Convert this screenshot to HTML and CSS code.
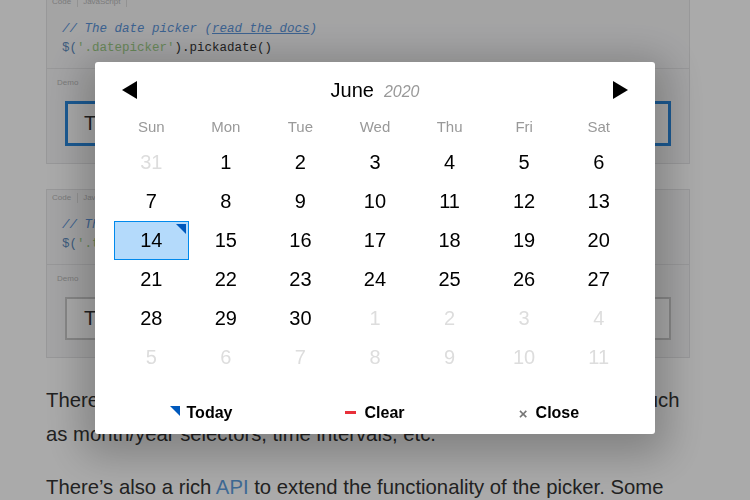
FILE: index.html
```html
<!DOCTYPE html>
<html>
<head>
<meta charset="utf-8">
<link rel="stylesheet" href="styles.css">
</head>
<body>
<div class="page">
  <div class="panel">
    <div class="tabs"><span class="tab">Code</span><span class="tab">JavaScript</span></div>
    <pre class="code"><span class="cm">// The date picker (<a class="cm-link">read the docs</a>)</span>
<span class="fn">$(</span><span class="str">'.datepicker'</span>).pickadate()</pre>
    <div class="demo">
      <div class="tabs demo-tabs"><span class="tab">Demo</span></div>
      <div class="input input-focus">Try me…</div>
    </div>
  </div>
  <div class="panel">
    <div class="tabs"><span class="tab">Code</span><span class="tab">JavaScript</span></div>
    <pre class="code"><span class="cm">// The time picker (<a class="cm-link">read the docs</a>)</span>
<span class="fn">$(</span><span class="str">'.timepicker'</span>).pickatime()</pre>
    <div class="demo">
      <div class="tabs demo-tabs"><span class="tab">Demo</span></div>
      <div class="input">Try me…</div>
    </div>
  </div>
  <p class="para">There are a number of other options to customize the picker with, such as month/year selectors, time intervals, etc.</p>
  <p class="para">There’s also a rich <a class="link">API</a> to extend the functionality of the picker. Some examples of what you can do.</p>
</div>

<div class="backdrop">
  <div class="picker">
    <div class="header">
      <span class="nav nav-prev"></span>
      <div class="title"><span class="month">June</span><span class="year">2020</span></div>
      <span class="nav nav-next"></span>
    </div>
    <div class="weekdays">
      <span>Sun</span><span>Mon</span><span>Tue</span><span>Wed</span><span>Thu</span><span>Fri</span><span>Sat</span>
    </div>
    <div class="days">
      <span class="day off">31</span><span class="day">1</span><span class="day">2</span><span class="day">3</span><span class="day">4</span><span class="day">5</span><span class="day">6</span>
      <span class="day">7</span><span class="day">8</span><span class="day">9</span><span class="day">10</span><span class="day">11</span><span class="day">12</span><span class="day">13</span>
      <span class="day today">14</span><span class="day">15</span><span class="day">16</span><span class="day">17</span><span class="day">18</span><span class="day">19</span><span class="day">20</span>
      <span class="day">21</span><span class="day">22</span><span class="day">23</span><span class="day">24</span><span class="day">25</span><span class="day">26</span><span class="day">27</span>
      <span class="day">28</span><span class="day">29</span><span class="day">30</span><span class="day off">1</span><span class="day off">2</span><span class="day off">3</span><span class="day off">4</span>
      <span class="day off">5</span><span class="day off">6</span><span class="day off">7</span><span class="day off">8</span><span class="day off">9</span><span class="day off">10</span><span class="day off">11</span>
    </div>
    <div class="footer">
      <span class="btn"><span class="ic-today"></span>Today</span>
      <span class="btn"><span class="ic-clear"></span>Clear</span>
      <span class="btn"><span class="ic-close">×</span>Close</span>
    </div>
  </div>
</div>
</body>
</html>
```
FILE: styles.css
```css
* { box-sizing: border-box; }
html, body { margin: 0; padding: 0; background: #fff; }
body {
  font-family: "Liberation Sans", Arial, sans-serif;
  color: #333;
  overflow: hidden;
  height: 500px;
}
.page {
  width: 690px;
  padding-left: 46px;
  margin-top: -7px;
}
.panel {
  background: #f6f6f7;
  border: 1px solid #e4e4e6;
  margin-bottom: 25px;
}
.tabs {
  display: flex;
  font-size: 8px;
  line-height: 10px;
  color: #b9b9b9;
  padding-top: 3px;
}
.tab {
  padding: 0 6px 0 5px;
  border-right: 1px solid #dcdcdc;
}
.code {
  margin: 0;
  padding: 13px 15px 10px;
  font-family: "Liberation Mono", monospace;
  font-size: 12.5px;
  line-height: 19px;
  color: #333;
}
.cm { color: #5a93d8; font-style: italic; }
.cm-link { text-decoration: underline; }
.fn { color: #5b8abd; }
.str { color: #9ccb86; }
.demo {
  border-top: 1px solid #e4e4e6;
  padding: 6px 18px 17px;
}
.demo-tabs { padding-top: 3px; margin-left: -13px; }
.demo-tabs .tab { border-right: 0; }
.input {
  margin-top: 13px;
  height: 43px;
  border: 2px solid #cbcbcb;
  background: #fff;
  padding-left: 17px;
  font-size: 20px;
  line-height: 39px;
  color: #333;
}
.input-focus {
  height: 45px;
  border: 3px solid #2a88dd;
  padding-left: 16px;
}
.para {
  width: 641px;
  margin: 0 0 19px;
  font-size: 20.3px;
  line-height: 34px;
  color: #333;
}
.link { color: #5ea0df; }

.backdrop {
  position: fixed;
  inset: 0;
  background: rgba(0, 0, 0, 0.335);
  display: flex;
  justify-content: center;
  align-items: flex-start;
  padding-top: 62px;
}
.picker {
  width: 560px;
  background: #fff;
  border-radius: 3px;
  padding: 8px 19px 1px;
  box-shadow: 0 10px 40px 12px rgba(0, 0, 0, 0.24);
  font-size: 20px;
  color: #000;
}
.header {
  height: 40px;
  display: grid;
  grid-template-columns: 1fr auto 1fr;
  align-items: center;
  padding: 0 8px;
  margin-bottom: 5px;
}
.nav {
  width: 0;
  height: 0;
  border-top: 9px solid transparent;
  border-bottom: 9px solid transparent;
}
.nav-prev { border-right: 15px solid #000; justify-self: start; }
.nav-next { border-left: 15px solid #000; justify-self: end; }
.title {
  display: flex;
  align-items: baseline;
  gap: 10px;
}
.month { font-size: 20px; color: #000; }
.year { font-size: 16px; font-style: italic; color: #999; }
.weekdays {
  display: grid;
  grid-template-columns: repeat(7, 1fr);
  text-align: center;
  font-size: 15px;
  line-height: 24px;
  color: #999;
  margin-bottom: 4px;
}
.days {
  display: grid;
  grid-template-columns: repeat(7, 1fr);
  grid-auto-rows: 39px;
}
.day {
  position: relative;
  border: 1px solid transparent;
  text-align: center;
  line-height: 37px;
  font-size: 20px;
  color: #000;
}
.day.off { color: #ddd; }
.day.today {
  background: #b4dafb;
  border-color: #0089ec;
}
.day.today::before {
  content: "";
  position: absolute;
  top: 2px;
  right: 2px;
  border-top: 10px solid #0059bc;
  border-left: 10px solid transparent;
}
.footer {
  display: grid;
  grid-template-columns: repeat(3, 1fr);
  margin-top: 16px;
}
.btn {
  display: flex;
  justify-content: center;
  align-items: center;
  height: 40px;
  font-size: 16px;
  font-weight: 700;
  color: #000;
}
.ic-today {
  width: 0;
  height: 0;
  border-top: 10px solid #0059bc;
  border-left: 10px solid transparent;
  margin-right: 7px;
  margin-top: -4px;
}
.ic-clear {
  width: 11px;
  height: 3px;
  background: #e8303a;
  margin-right: 8px;
  margin-top: -1px;
}
.ic-close {
  font-size: 15px;
  font-weight: 700;
  color: #777;
  margin-right: 8px;
}
```
